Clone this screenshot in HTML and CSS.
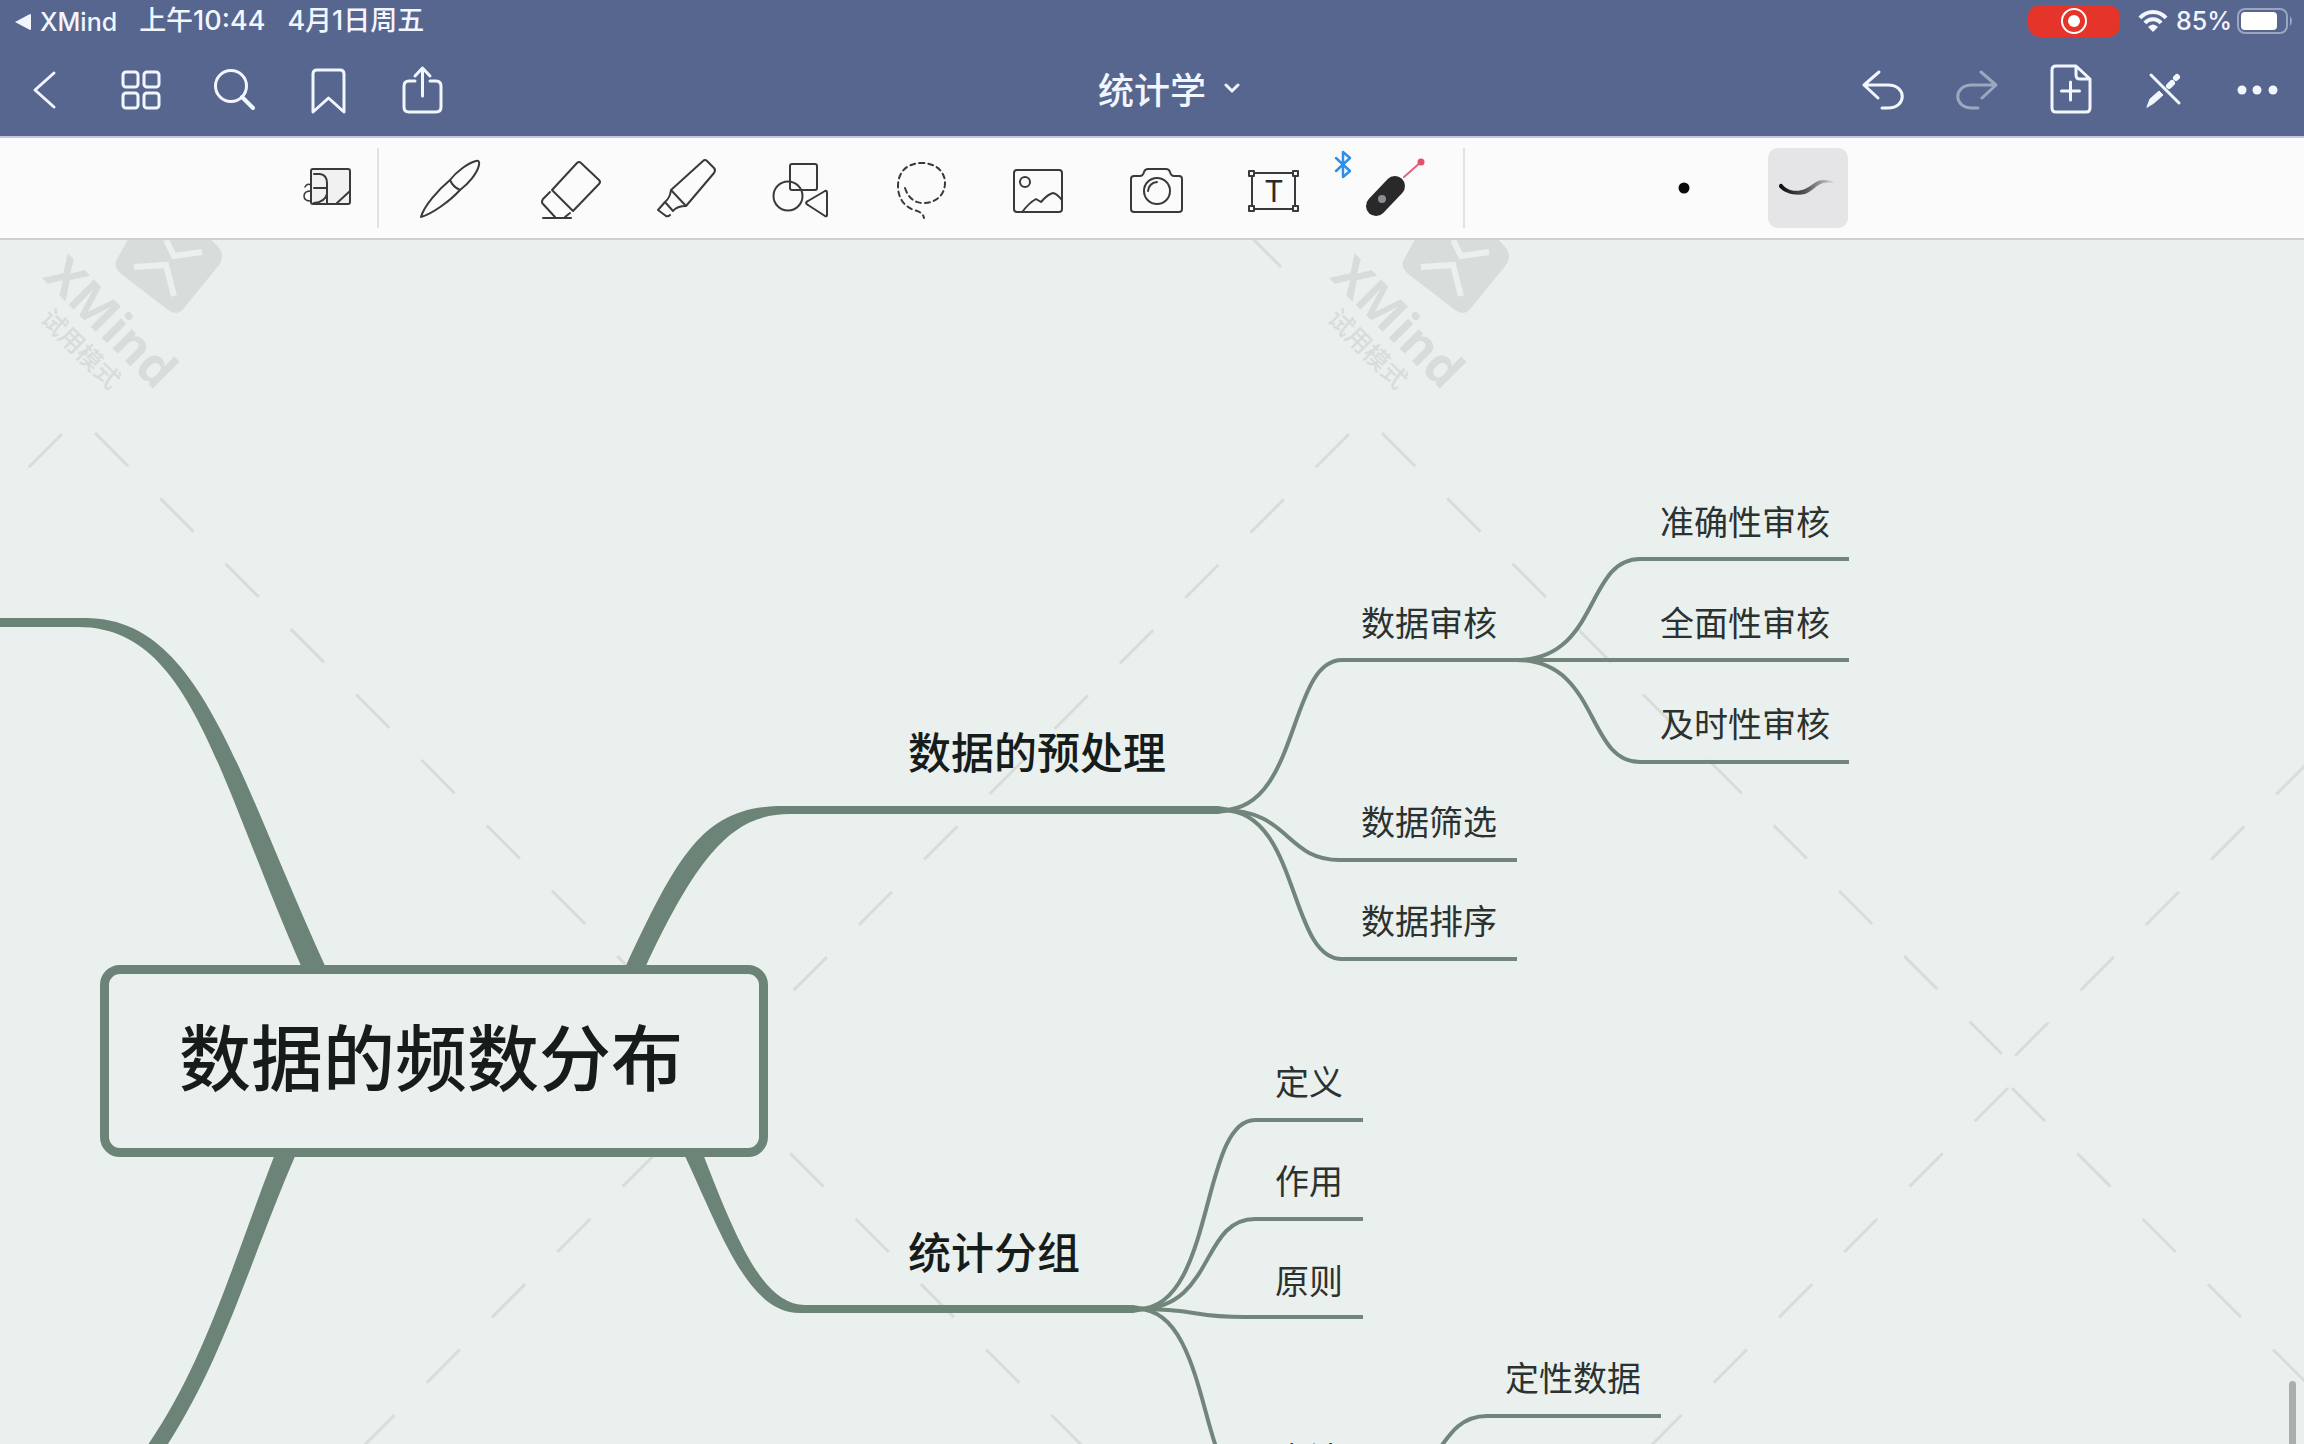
FILE: index.html
```html
<!DOCTYPE html>
<html lang="zh-CN">
<head>
    <meta charset="UTF-8">
    <meta name="viewport" content="width=device-width, initial-scale=1.0">
    <title>统计学</title>
    <link rel="stylesheet" href="styles.css">
</head>
<body>
    <header class="header">
        <!-- Status bar -->
        <div class="status">
            <div class="status-left">
                <a class="back-app" href="#">
                    <svg width="18" height="18" viewBox="0 0 18 18"><path d="M1 9 L16 1 Q17 1 17 2 V16 Q17 17 16 17 Z" fill="#f1f6ff"/></svg>
                    XMind
                </a>
                <span class="clock">上午10:44</span>
                <span class="clock">4月1日周五</span>
            </div>
            <div class="status-right">
                <span class="recording">
                    <svg width="28" height="28" viewBox="0 0 28 28"><circle cx="14" cy="14" r="12" fill="none" stroke="#fff" stroke-width="2"/><circle cx="14" cy="14" r="6" fill="#fff"/></svg>
                </span>
                <svg class="wifi" width="30" height="24" viewBox="0 0 30 24">
                    <g fill="none" stroke="#f1f6ff" stroke-width="4">
                        <path d="M2 9 C9 1 21 1 28 9"/>
                        <path d="M7 14 C11 9 19 9 23 14"/>
                    </g>
                    <path d="M10 18 Q15 13 20 18 L15 23 Z" fill="#f1f6ff"/>
                </svg>
                <span>85%</span>
                <svg class="battery" width="58" height="28" viewBox="0 0 58 28">
                    <rect x="2" y="2" width="49" height="24" rx="7" fill="none" stroke="#9ba5c2" stroke-width="2"/>
                    <rect x="5" y="5" width="36" height="18" rx="4" fill="#fff"/>
                    <path d="M54 9 Q58 14 54 19 Z" fill="#9ba5c2"/>
                </svg>
            </div>
        </div>

        <!-- Navigation -->
        <nav class="nav">
            <div class="nav-group">
                <button class="nav-btn" aria-label="返回"><svg viewBox="0 0 48 48"><path d="M31 7 L12 24 L31 41"/></svg></button>
                <button class="nav-btn" aria-label="缩略图"><svg viewBox="0 0 48 48"><rect x="6" y="6" width="15" height="15" rx="3"/><rect x="27" y="6" width="15" height="15" rx="3"/><rect x="6" y="27" width="15" height="15" rx="3"/><rect x="27" y="27" width="15" height="15" rx="3"/></svg></button>
                <button class="nav-btn" aria-label="搜索"><svg viewBox="0 0 48 48"><circle cx="20" cy="20" r="15.5"/><path d="M31 31 L42 42" stroke-width="4"/></svg></button>
                <button class="nav-btn" aria-label="书签"><svg viewBox="0 0 48 48"><path d="M8 46 V8 Q8 4 12 4 H35 Q39 4 39 8 V46 L23.5 32 Z"/></svg></button>
                <button class="nav-btn" aria-label="分享"><svg viewBox="0 0 48 48"><path d="M16 15 H10 Q5 15 5 20 V41 Q5 46 10 46 H37 Q42 46 42 41 V20 Q42 15 37 15 H31"/><path d="M23.5 30 V2 M16 10 L23.5 2 L31 10"/></svg></button>
            </div>
            <button class="title">统计学
                <svg width="16" height="10" viewBox="0 0 16 10"><path d="M2 2 L8 8 L14 2"/></svg>
            </button>
            <div class="nav-group right">
                <button class="nav-btn" aria-label="撤销"><svg viewBox="0 0 48 48"><path d="M22 6 L7 19 L21 32 M7 19 H31 C50 19 50 42 31 42 H25"/></svg></button>
                <button class="nav-btn" aria-label="重做" disabled><svg viewBox="0 0 48 48"><path d="M30 6 L45 19 L31 32 M45 19 H21 C2 19 2 42 21 42 H27"/></svg></button>
                <button class="nav-btn" aria-label="添加页面"><svg viewBox="0 0 48 48"><path d="M31 0 H11 Q7 0 7 4 V42 Q7 46 11 46 H41 Q45 46 45 42 V13 L31 0 V9 Q31 13 35 13 H45"/><path d="M25.5 16 V34 M16.5 25 H34.5"/></svg></button>
                <button class="nav-btn" aria-label="只读模式"><svg viewBox="0 0 48 48"><path d="M12 9 L40 37" stroke-width="3"/><path d="M8 41 L11 33 L20 25 L24 29 L15 37 Z" fill="#f1f6ff" stroke-width="1"/><path d="M30 20 L33 17 M37 12 L38 11" stroke-width="6"/></svg></button>
                <button class="nav-btn" aria-label="更多"><svg viewBox="0 0 48 48"><g fill="#f1f6ff" stroke="none"><circle cx="9" cy="24" r="4.5"/><circle cx="24" cy="24" r="4.5"/><circle cx="40" cy="24" r="4.5"/></g></svg></button>
            </div>
        </nav>
    </header>

    <!-- Drawing tools -->
    <div class="toolbar">
        <button class="tool zoom-tool" aria-label="放大窗口"><svg viewBox="0 0 64 64"><rect x="16" y="13" width="39" height="35" rx="2" fill="#f1f1f2"/><path d="M19 18 H25 Q32 19 32 27 V48 M19 32 H32 M32 38 Q30 46 19 47 M42 47 L55 35"/><path d="M10 31 Q12 27 16 29 M16 35 Q9 35 9 40 Q9 45 16 45" stroke-width="1.5"/></svg></button>
        <div class="tools">
            <button class="tool" aria-label="钢笔"><svg viewBox="0 0 64 64"><path d="M3 61 C6 50 20 34 32 24 C38 16 50 7 58 5 Q62 4 61 9 C59 18 50 28 42 34 C32 45 14 58 3 61 Z M32 24 Q35 31 42 34"/></svg></button>
            <button class="tool" aria-label="橡皮擦"><svg viewBox="0 0 64 64"><path d="M41 7 Q43 5 45 7 L63 24 Q65 26 63 28 L37 55 L16 34 Z M14 36 L7 43 Q5 46 7 48 L19 61 M34 57 L29 61 M7 62 H35"/></svg></button>
            <button class="tool" aria-label="荧光笔"><svg viewBox="0 0 64 64"><path d="M17 34 L49 5 Q51 3 53 5 L60 12 Q62 14 60 17 L32 50 Z M17 34 Q16 42 11 46 L19 55 Q23 50 32 50 M11 46 L4 54 L12 60 Q14 61 16 59"/></svg></button>
            <button class="tool" aria-label="形状"><svg viewBox="0 0 64 64"><rect x="18" y="8" width="27" height="26" rx="2"/><circle cx="16" cy="40" r="14.5"/><path d="M34 47 Q34 46 36 45 L53 35 Q55 34 55 37 V59 Q55 61 53 60 L36 49 Q34 48 34 47 Z"/></svg></button>
            <button class="tool" aria-label="套索"><svg viewBox="0 0 64 64"><path stroke-dasharray="5 4" d="M15 32 C18 41 24 47 33 47 C47 47 55 38 55 27 C55 15 45 7 32 7 C18 7 8 15 8 30 C8 44 16 51 24 54 Q33 56 34 62"/></svg></button>
            <button class="tool" aria-label="图片"><svg viewBox="0 0 64 64"><rect x="6" y="14" width="48" height="42" rx="3"/><circle cx="17" cy="26" r="5"/><path d="M15 55 Q21 47 28 43 L33 46 Q40 38 45 37 Q48 37 54 44"/></svg></button>
            <button class="tool" aria-label="相机"><svg viewBox="0 0 64 64"><path d="M8 20 H14 Q17 20 18 16 Q19 13 22 13 H40 Q43 13 44 16 Q45 20 48 20 H53 Q56 20 56 23 V53 Q56 56 53 56 H8 Q5 56 5 53 V23 Q5 20 8 20 Z"/><circle cx="31" cy="35" r="13"/><path d="M22 35 Q23 27 31 26"/></svg></button>
            <button class="tool" aria-label="文本"><svg viewBox="0 0 64 64"><path d="M10 17 H49 M10 53 H49 M8 20 V50 M51 20 V50"/><rect x="5" y="15" width="5" height="5"/><rect x="49" y="15" width="5" height="5"/><rect x="5" y="50" width="5" height="5"/><rect x="49" y="50" width="5" height="5"/><text x="30" y="46" class="tool-letter">T</text></svg></button>
            <button class="tool" aria-label="激光笔"><svg viewBox="0 0 64 64"><path d="M-26 2 L-12 15 L-19 21 V-4 L-12 2 L-26 15" stroke="#2f8ee8" stroke-width="2.5"/><path d="M14 50 L33 30" stroke="#29292b" stroke-width="20"/><circle cx="20" cy="43" r="4" fill="#8d8d90" stroke="none"/><path d="M42 21 L59 6" stroke="#e2637c"/><circle cx="59" cy="6" r="3.5" fill="#e2506c" stroke="none"/></svg></button>
        </div>
        <div class="presets">
            <button class="preset" aria-label="笔尖粗细"><svg width="12" height="12" viewBox="0 0 12 12"><circle cx="6" cy="6" r="5.5" fill="#0a0a0a"/></svg></button>
            <button class="preset selected" aria-label="笔画样式">
                <svg width="60" height="24" viewBox="0 0 60 24">
                    <defs><linearGradient id="ink"><stop offset="0" stop-color="#0a0a0a"/><stop offset=".5" stop-color="#5a5a5c"/><stop offset="1" stop-color="#dcdcde"/></linearGradient></defs>
                    <path d="M4 8 C10 16 20 16 27 13 C35 9 38 4 46 4 Q53 4 57 7 Q50 6 45 7 C38 9 35 15 27 18 C18 20 7 18 1 11 Q1 7 4 8 Z" fill="url(#ink)"/>
                </svg>
            </button>
        </div>
    </div>

    <!-- Mind map page -->
    <main class="canvas">
        <svg class="layer">
            <defs>
                <g id="mark">
                    <path d="M130 -4 L117 19 Q113 26 120 33 L168 70 Q177 77 184 68 L219 25 Q225 16 219 8 L208 -4 Z"/>
                    <path class="mark-fold" d="M134 27 L166 25 L174 56 M166 0 L174 16 L202 12"/>
                    <text class="mark-name" transform="translate(42 38) rotate(45)">XMind</text>
                    <text class="mark-note" transform="translate(39 80) rotate(45)">试用模式</text>
                </g>
                <g id="dashes">
                    <path d="M95 193 L715 814"/>
                    <path d="M725 848 L1345 1469"/>
                    <path d="M1349 194 L727 817"/>
                    <path d="M721 848 L99 1471"/>
                </g>
            </defs>
            <use href="#mark" class="mark"/>
            <use href="#mark" class="mark" x="1287"/>
            <g class="dashes">
                <path d="M62 194 L28 228"/>
                <path d="M1248 -6 L1281 27"/>
                <use href="#dashes"/>
                <use href="#dashes" x="1287"/>
            </g>

            <g class="trunk">
                <path d="M0 378 H80 C200 373 235 530 326 728 H302 C215 530 190 387 78 387 H0 Z"/>
                <path d="M275 914 C230 1030 203 1130 140 1216 H160 C222 1125 246 1030 296 914 Z"/>
                <path d="M625 728 C680 610 705 566 784 566 H1218 L1230 568 V572 L1218 574 H790 C735 574 700 610 645 728 Z"/>
                <path d="M684 914 C722 995 748 1073 800 1073 H1133 L1144 1071 V1067 L1133 1065 H805 C765 1064 740 1010 703 914 Z"/>
            </g>
            <g class="branch">
                <path d="M1222 570 C1300 570 1288 420 1342 420 H1849"/>
                <path d="M1222 570 C1290 570 1285 620 1340 620 H1517"/>
                <path d="M1222 570 C1300 570 1288 719 1342 719 H1517"/>
                <path d="M1516 420 C1600 420 1585 319 1640 319 H1849"/>
                <path d="M1516 420 C1600 420 1585 522 1640 522 H1849"/>
                <path d="M1138 1069 C1215 1069 1200 880 1255 880 H1363"/>
                <path d="M1138 1069 C1215 1069 1200 979 1255 979 H1363"/>
                <path d="M1138 1069 C1200 1069 1190 1077 1245 1077 H1363"/>
                <path d="M1138 1069 C1212 1070 1199 1253 1252 1253 H1365"/>
                <path d="M1368 1253 C1443 1253 1433 1176 1487 1176 H1661"/>
            </g>
        </svg>

        <div class="node root" style="left:100px;top:725px">数据的频数分布</div>
        <div class="node main" style="left:908px;top:486px">数据的预处理</div>
        <div class="node main" style="left:908px;top:986px">统计分组</div>
        <div class="node" style="left:1361px;top:362px">数据审核</div>
        <div class="node" style="left:1361px;top:561px">数据筛选</div>
        <div class="node" style="left:1361px;top:660px">数据排序</div>
        <div class="node" style="left:1660px;top:261px">准确性审核</div>
        <div class="node" style="left:1660px;top:362px">全面性审核</div>
        <div class="node" style="left:1660px;top:463px">及时性审核</div>
        <div class="node" style="left:1275px;top:821px">定义</div>
        <div class="node" style="left:1275px;top:920px">作用</div>
        <div class="node" style="left:1275px;top:1020px">原则</div>
        <div class="node" style="left:1275px;top:1198px">方法</div>
        <div class="node" style="left:1505px;top:1117px">定性数据</div>
        <div class="scrollbar"></div>
    </main>
</body>
</html>
```
FILE: styles.css
```css
* {
    box-sizing: border-box;
}
body {
    margin: 0;
    height: 100vh;
    display: flex;
    flex-direction: column;
    overflow: hidden;
    font-family: Inter, "Noto Sans CJK SC", sans-serif;
    background-color: #eaf0ee;
}
button {
    padding: 0;
    border: none;
    background: none;
    font-family: inherit;
    cursor: pointer;
}

/* header */
.header {
    background-color: #57668e;
    color: #f1f6ff;
    border-bottom: 2px solid #c3c8e0;
}
.status {
    display: flex;
    justify-content: space-between;
    height: 44px;
    padding: 0 10px 0 14px;
    font-size: 25px;
    font-weight: 500;
    line-height: 42px;
}
.status-left {
    display: flex;
    gap: 22px;
}
.clock {
    font-size: 27px;
}
.status-right {
    display: flex;
    align-items: center;
    height: 42px;
}
.back-app {
    display: flex;
    align-items: center;
    gap: 8px;
    color: inherit;
    text-decoration: none;
}
.recording {
    display: flex;
    align-items: center;
    justify-content: center;
    width: 92px;
    height: 32px;
    margin-right: 18px;
    border-radius: 12px;
    background-color: #e5352b;
}
.wifi {
    margin-right: 8px;
}
.battery {
    margin-left: 4px;
}
.nav {
    display: grid;
    grid-template-columns: 1fr auto 1fr;
    height: 92px;
}
.nav-group {
    display: flex;
}
.nav-group.right {
    justify-content: flex-end;
}
.nav-btn {
    display: flex;
    align-items: center;
    justify-content: center;
    width: 94px;
}
.nav-btn:disabled {
    opacity: 0.45;
}
.nav-btn svg {
    width: 48px;
    height: 48px;
    overflow: visible;
}
.nav svg {
    fill: none;
    stroke: #f1f6ff;
    stroke-width: 3;
    stroke-linecap: round;
    stroke-linejoin: round;
}
.title {
    display: flex;
    align-items: center;
    gap: 18px;
    padding: 0 0 4px 34px;
    color: #f1f6ff;
    font-size: 36px;
    font-weight: 500;
}

/* toolbar */
.toolbar {
    display: flex;
    align-items: center;
    justify-content: center;
    height: 102px;
    background-color: #fbfbfb;
    border-bottom: 2px solid #cfd1d1;
}
.tool {
    display: flex;
    align-items: center;
    justify-content: center;
    width: 118px;
    height: 80px;
}
.tool svg {
    width: 64px;
    height: 64px;
    overflow: visible;
    fill: none;
    stroke: #3a3a3c;
    stroke-width: 2;
    stroke-linecap: round;
    stroke-linejoin: round;
}
.tool-letter {
    font-size: 30px;
    text-anchor: middle;
    fill: #2a2a2c;
    stroke: none;
}
.zoom-tool {
    width: 100px;
}
.tools {
    display: flex;
    padding: 0 10px 0 12px;
    border-left: 2px solid #e2e2e4;
    border-right: 2px solid #e2e2e4;
}
.presets {
    display: flex;
    justify-content: center;
    gap: 44px;
    width: 562px;
}
.preset {
    display: flex;
    align-items: center;
    justify-content: center;
    width: 80px;
    height: 80px;
    border-radius: 10px;
}
.preset.selected {
    background-color: #e5e5e7;
}

/* mind map */
.canvas {
    position: relative;
    flex: 1;
    overflow: hidden;
}
.layer {
    position: absolute;
    width: 100%;
    height: 100%;
}
.mark {
    fill: #d8dddb;
}
.mark-fold {
    fill: none;
    stroke: #eaf0ee;
    stroke-width: 6;
}
.mark-name {
    font-family: "Open Sans", sans-serif;
    font-size: 50px;
    font-weight: 700;
}
.mark-note {
    font-size: 25px;
    font-weight: 500;
}
.dashes {
    fill: none;
    stroke: #d8dddb;
    stroke-width: 3;
    stroke-dasharray: 47 45.4;
}
.trunk {
    fill: #6c8377;
}
.branch {
    fill: none;
    stroke: #71857b;
    stroke-width: 4;
}
.node {
    position: absolute;
    color: #2b3230;
    font-family: "Noto Sans CJK SC", sans-serif;
    font-size: 34px;
    line-height: 40px;
    white-space: nowrap;
}
.node.main {
    color: #161c1a;
    font-size: 43px;
    line-height: 48px;
    font-weight: 500;
}
.node.root {
    padding: 38px 76px 52px 70px;
    border: 9px solid #6c8377;
    border-radius: 20px;
    background-color: #eaf0ee;
    color: #161c1a;
    font-size: 72px;
    line-height: 84px;
    font-weight: 500;
}
.scrollbar {
    position: absolute;
    right: 8px;
    top: 1141px;
    bottom: 0;
    width: 7px;
    border-radius: 4px 4px 0 0;
    background-color: #a9afad;
}
```
